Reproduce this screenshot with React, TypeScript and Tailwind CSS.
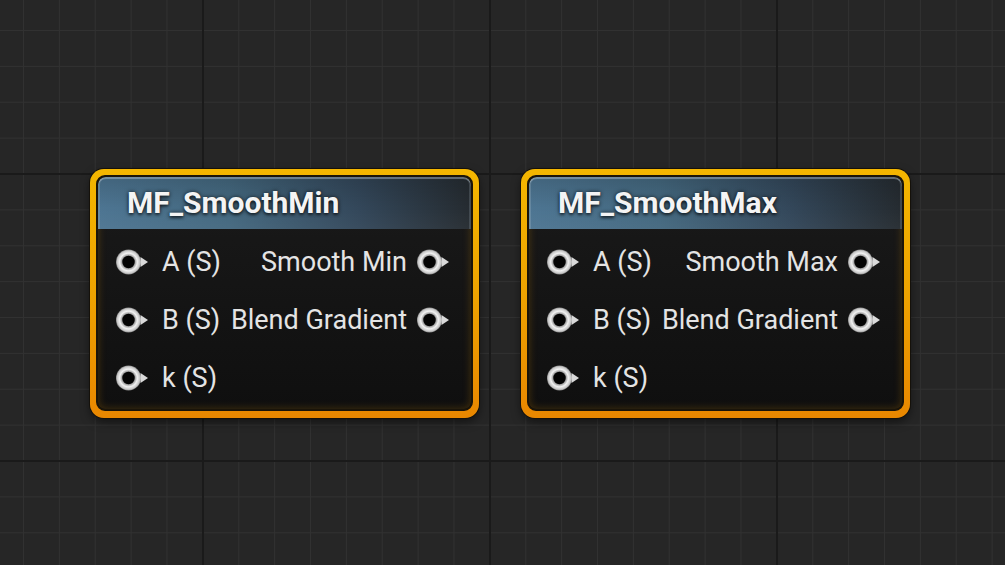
import React from 'react'

interface NodeProps {
  title: string
  inputs: string[]
  outputs: string[]
}

const font = { fontFamily: 'Roboto, "Open Sans", sans-serif' }

function PinIcon() {
  return (
    <svg width="36" height="28" viewBox="0 0 36 28" className="shrink-0">
      <defs>
        <radialGradient id="ring" cx="0.5" cy="0.5" r="0.5">
          <stop offset="0.45" stopColor="#7a7a7a" />
          <stop offset="0.7" stopColor="#f2f2f2" />
          <stop offset="0.9" stopColor="#c8c8c8" />
          <stop offset="1" stopColor="#8a8a8a" />
        </radialGradient>
      </defs>
      <circle cx="12.5" cy="14" r="12.5" fill="url(#ring)" />
      <circle cx="12.5" cy="14" r="6.2" fill="#040404" />
      <path d="M24.5 9 L32 14 L24.5 19 Z" fill="#dadada" />
    </svg>
  )
}

function GraphNode({ title, inputs, outputs }: NodeProps) {
  const rows = Math.max(inputs.length, outputs.length)

  return (
    <div className="w-[389px] h-[249px] shrink-0 rounded-[14px] p-[6px] pb-[7px] bg-[linear-gradient(to_bottom,#f4b600,#eea300_50%,#e98700)] shadow-[0_0_0_1px_#15110a,0_4px_10px_rgba(0,0,0,0.5)]">
      <div className="h-full rounded-[9px] border-2 border-[#1a1409] overflow-hidden flex flex-col bg-[linear-gradient(to_bottom,#1a1a1a,#0f0f0f)] shadow-[inset_0_0_8px_rgba(200,130,0,0.3)]">
        <div className="h-[52px] shrink-0 flex items-center pl-[29px] rounded-t-[8px] bg-[linear-gradient(to_bottom,rgba(0,0,0,0.14),rgba(0,0,0,0)_60%,rgba(255,255,255,0.03)),linear-gradient(to_right,#4d7592,#44687f_35%,#33475a_70%,#252b30)] shadow-[inset_0_2px_0_rgba(190,205,215,0.4),inset_2px_0_0_rgba(190,205,215,0.22),inset_-2px_0_0_rgba(190,205,215,0.18)]">
          <span
            className="text-[30px] font-bold text-[#f4f4f4] leading-none [text-shadow:0_0_4px_rgba(0,0,0,0.7),0_2px_3px_rgba(0,0,0,0.5)]"
            style={font}
          >
            {title}
          </span>
        </div>
        <div className="flex flex-col pt-[4px]">
          {Array.from({ length: rows }).map((_, i) => (
            <div key={i} className="h-[58px] flex items-center justify-between pl-[18px] pr-[18px]">
              <div className="flex items-center gap-[10px]">
                {inputs[i] && (
                  <>
                    <PinIcon />
                    <span className="text-[27px] text-[#e4e4e4] leading-none" style={font}>
                      {inputs[i]}
                    </span>
                  </>
                )}
              </div>
              <div className="flex items-center gap-[10px]">
                {outputs[i] && (
                  <>
                    <span className="text-[27px] text-[#e4e4e4] leading-none" style={font}>
                      {outputs[i]}
                    </span>
                    <PinIcon />
                  </>
                )}
              </div>
            </div>
          ))}
        </div>
      </div>
    </div>
  )
}

export default function App() {
  return (
    <div className="w-[1005px] h-[565px] overflow-hidden bg-[#262626] bg-[image:linear-gradient(to_right,#1a1a1a_2px,transparent_2px),linear-gradient(to_bottom,#1a1a1a_2px,transparent_2px),linear-gradient(to_right,#313131_1px,transparent_1px),linear-gradient(to_bottom,#313131_1px,transparent_1px)] bg-[size:287px_287px,287px_287px,35.875px_35.875px,35.875px_35.875px] bg-[position:202px_173px,202px_173px,23px_30px,23px_30px]">
      <div className="flex gap-[42px] pt-[169px] pl-[90px]">
        <GraphNode
          title="MF_SmoothMin"
          inputs={['A (S)', 'B (S)', 'k (S)']}
          outputs={['Smooth Min', 'Blend Gradient']}
        />
        <GraphNode
          title="MF_SmoothMax"
          inputs={['A (S)', 'B (S)', 'k (S)']}
          outputs={['Smooth Max', 'Blend Gradient']}
        />
      </div>
    </div>
  )
}
